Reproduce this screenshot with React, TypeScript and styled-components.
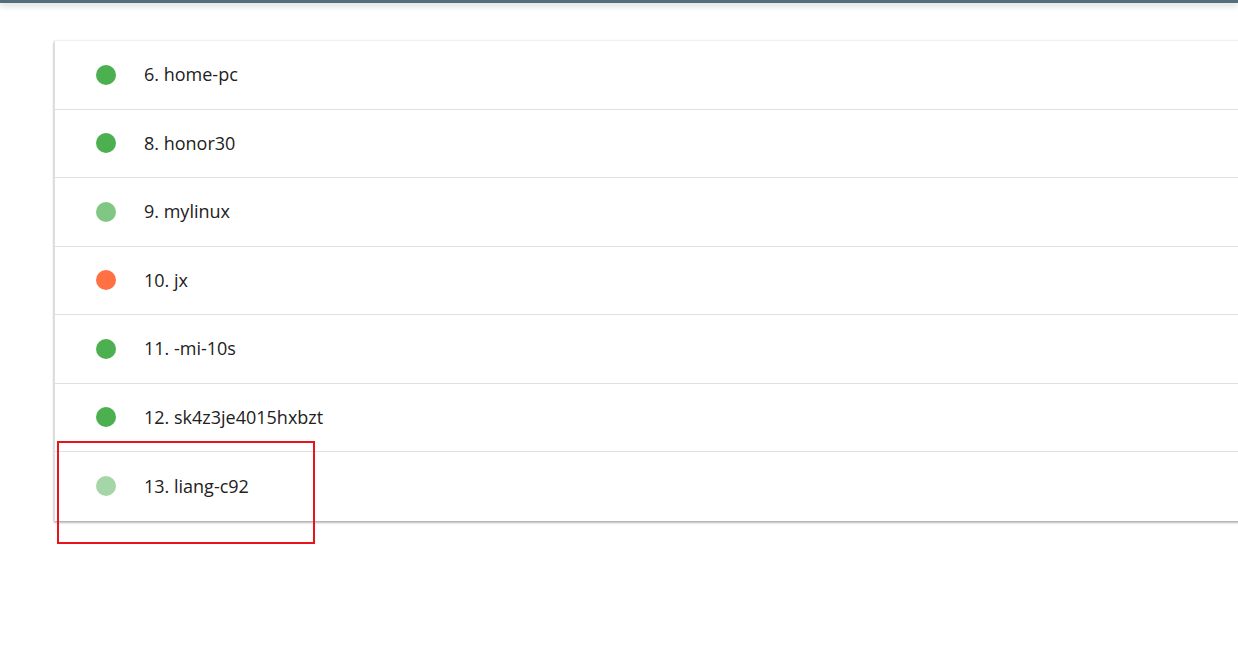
import React from 'react';
import styled, { createGlobalStyle } from 'styled-components';

const GlobalStyle = createGlobalStyle`
  html, body {
    margin: 0;
    padding: 0;
    background: #fff;
    overflow: hidden;
  }
  body {
    font-family: "Open Sans", "Noto Sans", sans-serif;
  }
`;

interface Device {
  id: number;
  name: string;
  color: string;
}

const devices: Device[] = [
  { id: 6, name: 'home-pc', color: '#4caf50' },
  { id: 8, name: 'honor30', color: '#4caf50' },
  { id: 9, name: 'mylinux', color: '#81c784' },
  { id: 10, name: 'jx', color: '#ff7043' },
  { id: 11, name: '-mi-10s', color: '#4caf50' },
  { id: 12, name: 'sk4z3je4015hxbzt', color: '#4caf50' },
  { id: 13, name: 'liang-c92', color: '#a5d6a7' },
];

const App: React.FC = () => {
  return (
    <Page>
      <GlobalStyle />
      <TopBar />
      <Content>
        <Card>
          {devices.map((d) => (
            <Row key={d.id}>
              <Dot color={d.color} />
              <Label>{`${d.id}. ${d.name}`}</Label>
            </Row>
          ))}
        </Card>
        <Highlight />
      </Content>
    </Page>
  );
};

const Page = styled.div`
  width: 1238px;
  height: 651px;
  overflow: hidden;
  position: relative;
`;

const TopBar = styled.div`
  height: 3px;
  background: #546e7a;
  box-shadow: 0 2px 6px rgba(0, 0, 0, 0.25);
`;

const Content = styled.div`
  position: relative;
  padding: 38px 0 0 54px;
`;

const Card = styled.div`
  width: 1260px;
  background: #fff;
  border-left: 1px solid #e0e0e0;
  box-shadow: 0 2px 2px rgba(0, 0, 0, 0.26), 0 0 2px rgba(0, 0, 0, 0.2);
`;

const Row = styled.div`
  display: flex;
  align-items: center;
  height: 68.5px;
  box-sizing: border-box;
  padding-left: 41px;
  border-bottom: 1px solid #e0e0e0;

  &:last-child {
    border-bottom: none;
  }
`;

const Dot = styled.span<{ color: string }>`
  width: 20px;
  height: 20px;
  border-radius: 50%;
  background: ${(p) => p.color};
  flex-shrink: 0;
`;

const Label = styled.span`
  margin-left: 28px;
  font-size: 18px;
  color: #212121;
  margin-top: -1px;
`;

const Highlight = styled.div`
  position: absolute;
  left: 57px;
  top: 438px;
  width: 258px;
  height: 103px;
  box-sizing: border-box;
  border: 2px solid #e8141c;
  pointer-events: none;
`;

export default App;
